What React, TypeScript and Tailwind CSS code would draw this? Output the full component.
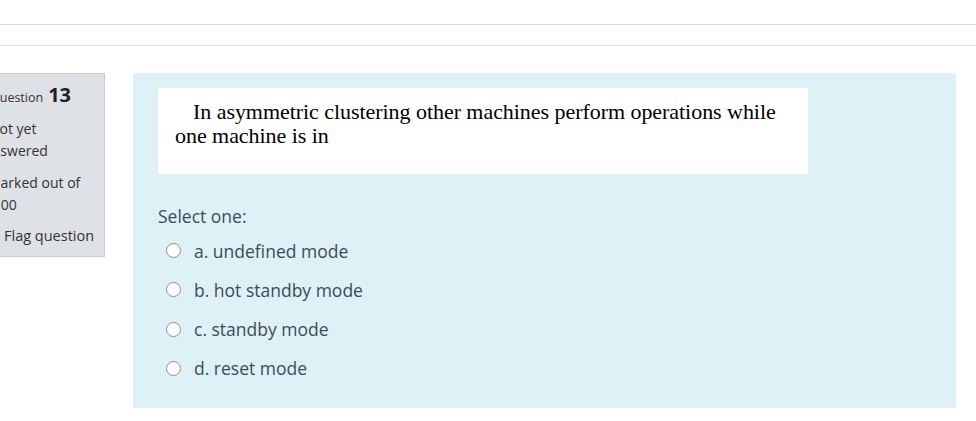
import React from "react";

function Radio() {
  return (
    <span className="inline-block w-[15px] h-[15px] rounded-full border border-[#8a8f94] bg-white shrink-0" />
  );
}

export default function App() {
  const options = ["a. undefined mode", "b. hot standby mode", "c. standby mode", "d. reset mode"];
  return (
    <div className="w-[976px] h-[421px] bg-white overflow-hidden relative" style={{ fontFamily: '"Open Sans", sans-serif' }}>
      <div className="h-[24px]" />
      <div className="h-[22px] border-t border-b border-[#dcdcdc]" />
      <div className="h-[27px]" />
      <div className="flex items-start">
        <div className="w-[105px] h-[184px] bg-[#dee2e6] border border-l-0 border-[#c8cdd2] overflow-hidden shrink-0">
          <div className="ml-[-9px] pt-[10px] text-[14px] text-[#333] leading-[22px]">
            <div className="flex items-baseline gap-[5px] ml-[-1px] whitespace-nowrap">
              <span className="text-[12.5px]">Question</span>
              <span className="text-[20px] font-bold text-[#222]">13</span>
            </div>
            <div className="mt-[9px] ml-[-2px] whitespace-nowrap">Not yet</div>
            <div className="ml-[-7px] whitespace-nowrap">answered</div>
            <div className="mt-[10px] ml-[-3px] whitespace-nowrap">Marked out of</div>
            <div className="ml-[-2px] whitespace-nowrap">1.00</div>
            <div className="mt-[9px] ml-[13px] whitespace-nowrap text-[14.5px]">Flag question</div>
          </div>
        </div>
        <div className="ml-[28px] w-[823px] h-[335px] bg-[#def1f7] pt-[15px] pl-[25px]">
          <div className="w-[650px] h-[86px] bg-white pl-[17px] pr-[20px] pt-[12px] text-[22px] leading-[24px] text-black" style={{ fontFamily: '"Liberation Serif", serif' }}>
            <p className="indent-[18px] tracking-[-0.05px]">In asymmetric clustering other machines perform operations while one machine is in</p>
          </div>
          <div className="mt-[30px] text-[17.5px] text-[#3a4d57] leading-[24px]">Select one:</div>
          <div className="mt-[3px] flex flex-col">
            {options.map((o) => (
              <label key={o} className="flex items-center h-[39.3px] pl-[8px] gap-[13px] text-[17.5px] text-[#3a4d57]">
                <Radio />
                <span>{o}</span>
              </label>
            ))}
          </div>
        </div>
      </div>
    </div>
  );
}
